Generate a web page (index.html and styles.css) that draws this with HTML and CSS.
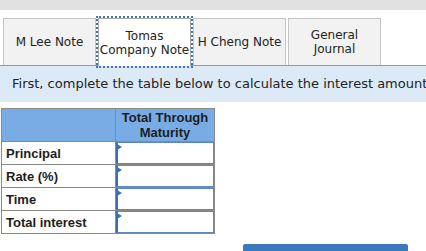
FILE: index.html
```html
<!DOCTYPE html>
<html lang="en">
<head>
  <meta charset="UTF-8">
  <meta name="viewport" content="width=device-width, initial-scale=1.0">
  <title>Notes</title>
  <link rel="stylesheet" href="styles.css">
</head>
<body>
  <div class="top-bar"></div>

  <!-- 탭 목록 -->
  <div class="tabs">
    <div class="tab">M Lee Note</div>
    <div class="tab active">Tomas<br>Company Note</div>
    <div class="tab">H Cheng Note</div>
    <div class="tab">General<br>Journal</div>
  </div>

  <div class="instructions">First, complete the table below to calculate the interest amount for each note.</div>

  <table class="calc-table">
    <tr>
      <th class="blank"></th>
      <th>Total Through<br>Maturity</th>
    </tr>
    <tr>
      <td class="label">Principal</td>
      <td class="value"><input type="text"></td>
    </tr>
    <tr>
      <td class="label">Rate (%)</td>
      <td class="value"><input type="text"></td>
    </tr>
    <tr>
      <td class="label">Time</td>
      <td class="value"><input type="text"></td>
    </tr>
    <tr>
      <td class="label">Total interest</td>
      <td class="value"><input type="text"></td>
    </tr>
  </table>

  <div class="actions">
    <button class="next-button" type="button"></button>
  </div>
</body>
</html>
```

FILE: styles.css
```css
/* 기본 설정 */
body {
  margin: 0;
  background-color: white;
  font-family: "DejaVu Sans", Verdana, sans-serif;
  color: #222;
  overflow: hidden;
}

/* 상단 회색 바 */
.top-bar {
  height: 10px;
  background-color: #e1e1e1;
  margin-bottom: 8px;
}

/* 탭 영역 */
.tabs {
  display: flex;
  gap: 2px;
  padding-left: 3px;
  height: 47px;
}

.tab {
  box-sizing: border-box;
  width: 93px;
  height: 47px;
  display: flex;
  align-items: center;
  justify-content: center;
  text-align: center;
  font-size: 12px;
  line-height: 14px;
  background-color: #f2f2f2;
  border: 1px solid #c6c6c6;
  border-bottom: none;
}

/* 선택된 탭 */
.tab.active {
  background-color: white;
  border-color: #a9a9a9;
  outline: 2px dotted #3f73b8;
  outline-offset: 0;
  height: 48px;
  position: relative;
  z-index: 1;
}

/* 안내 문구 */
.instructions {
  height: 36px;
  line-height: 36px;
  padding-left: 12px;
  font-size: 13px;
  white-space: nowrap;
  overflow: hidden;
  background-color: #dceaf8;
  border-top: 1px solid #999;
  margin-bottom: 6px;
}

/* 계산 표 */
.calc-table {
  border-collapse: collapse;
  margin-left: 1px;
  font-family: "Liberation Sans", Arial, sans-serif;
  font-size: 13px;
  color: #1e1e1e;
}

.calc-table th,
.calc-table td {
  border: 1px solid #8a8a8a;
  padding: 0;
}

.calc-table th {
  background-color: #79abe4;
  height: 32px;
  width: 98px;
  line-height: 15px;
  font-weight: bold;
  text-align: center;
}

.calc-table th.blank {
  width: 113px;
}

.calc-table td.label {
  height: 22px;
  padding-left: 4px;
  font-weight: bold;
}

.calc-table td.value {
  position: relative;
}

/* 입력칸 왼쪽 위 파란 삼각형 */
.calc-table td.value::before {
  content: "";
  position: absolute;
  top: 2px;
  left: 1px;
  border-top: 3px solid transparent;
  border-bottom: 3px solid transparent;
  border-left: 5px solid #3b6fb6;
}

.calc-table input {
  box-sizing: border-box;
  display: block;
  width: 98px;
  height: 22px;
  margin: 0;
  border: 1px solid #5d88c1;
  border-left: 2px solid #3d6eae;
  background-color: white;
}

/* 하단 버튼 */
.actions {
  display: flex;
  justify-content: flex-end;
  padding-right: 18px;
  margin-top: 10px;
}

.next-button {
  width: 165px;
  height: 32px;
  border: none;
  border-radius: 2px;
  background-color: #3b78bd;
}
```
